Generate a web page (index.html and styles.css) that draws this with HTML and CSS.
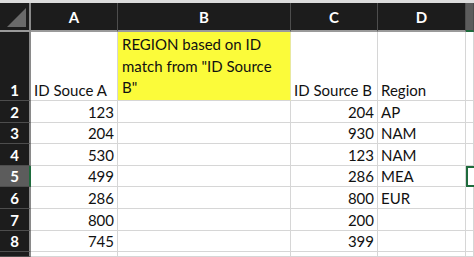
FILE: index.html
```html
<!DOCTYPE html>
<html lang="en">
<head>
    <meta charset="UTF-8">
    <title>Sheet</title>
    <link rel="stylesheet" href="styles.css">
</head>
<body>
    <div class="topstrip"></div>
    <div class="sheet">
        <!-- column headers -->
        <div class="hd corner"><span class="tri"></span></div>
        <div class="hd col">A</div>
        <div class="hd col">B</div>
        <div class="hd col">C</div>
        <div class="hd col">D</div>
        <div class="hd col sel-col"></div>

        <!-- row 1 -->
        <div class="hd row">1</div>
        <div class="cell txt">ID Souce A</div>
        <div class="cell yellow">REGION based on ID match from "ID Source B"</div>
        <div class="cell txt">ID Source B</div>
        <div class="cell txt">Region</div>
        <div class="cell"></div>

        <div class="hd row">2</div>
        <div class="cell num">123</div>
        <div class="cell"></div>
        <div class="cell num">204</div>
        <div class="cell txt">AP</div>
        <div class="cell"></div>

        <div class="hd row">3</div>
        <div class="cell num">204</div>
        <div class="cell"></div>
        <div class="cell num">930</div>
        <div class="cell txt">NAM</div>
        <div class="cell"></div>

        <div class="hd row">4</div>
        <div class="cell num">530</div>
        <div class="cell"></div>
        <div class="cell num">123</div>
        <div class="cell txt">NAM</div>
        <div class="cell"></div>

        <div class="hd row sel-row">5</div>
        <div class="cell num">499</div>
        <div class="cell"></div>
        <div class="cell num">286</div>
        <div class="cell txt">MEA</div>
        <div class="cell active"></div>

        <div class="hd row">6</div>
        <div class="cell num">286</div>
        <div class="cell"></div>
        <div class="cell num">800</div>
        <div class="cell txt">EUR</div>
        <div class="cell"></div>

        <div class="hd row">7</div>
        <div class="cell num">800</div>
        <div class="cell"></div>
        <div class="cell num">200</div>
        <div class="cell txt"></div>
        <div class="cell"></div>

        <div class="hd row">8</div>
        <div class="cell num">745</div>
        <div class="cell"></div>
        <div class="cell num">399</div>
        <div class="cell txt"></div>
        <div class="cell"></div>

        <!-- row 9, only a sliver shows -->
        <div class="hd row"></div>
        <div class="cell"></div>
        <div class="cell"></div>
        <div class="cell"></div>
        <div class="cell"></div>
        <div class="cell"></div>
    </div>
</body>
</html>
```

FILE: styles.css
```css
body {
    margin: 0;
    background: #fff;
    font-family: Lato, "Open Sans", sans-serif;
    font-size: 15px;
    color: #111;
    overflow: hidden;
}
.topstrip {
    height: 3px;
    background: #dcdcdc;
}
.sheet {
    display: grid;
    height: 254px;
    grid-template-columns: 31px 87px 173px 87px 88px minmax(0, 1fr);
    grid-template-rows: 29px 69px repeat(7, 21.6px) minmax(0, 1fr);
    overflow: hidden;
}
.cell {
    box-sizing: border-box;
    border-right: 1px solid #d6d6d6;
    border-bottom: 1px solid #d6d6d6;
    padding: 0 3px;
    line-height: 20px;
    white-space: nowrap;
    display: flex;
    align-items: flex-end;
    min-width: 0;
}
.num {
    justify-content: flex-end;
}
.yellow {
    background: #fbfb3a;
    white-space: normal;
    align-items: flex-start;
    padding: 2px 4px 0 4px;
    line-height: 21.5px;
    border-right-color: #e9e9a0;
}
.hd {
    box-sizing: border-box;
    background: #1c1c1c;
    color: #fff;
    font-weight: bold;
    font-size: 15px;
    display: flex;
    align-items: center;
    justify-content: center;
    border-right: 1px solid #4d4d4d;
    border-bottom: 1px solid #4d4d4d;
    min-width: 0;
}
.col {
    border-bottom: 2px solid #9a9a9a;
}
.row {
    align-items: flex-end;
    border-right: 2px solid #8a8a8a;
    line-height: 20px;
}
.corner {
    position: relative;
    border-bottom: 2px solid #9a9a9a;
    border-right: 2px solid #8a8a8a;
}
.tri {
    position: absolute;
    right: 3px;
    bottom: 3px;
    width: 0;
    height: 0;
    border-left: 19px solid transparent;
    border-bottom: 19px solid #6a6a6a;
}
.sel-col {
    background: #5c5c5c;
    border-bottom: 2px solid #1e6b3c;
}
.sel-row {
    background: #5c5c5c;
    border-right: 2px solid #1e6b3c;
}
.active {
    border: 2px solid #1e6b3c;
    border-right: none;
}
```
